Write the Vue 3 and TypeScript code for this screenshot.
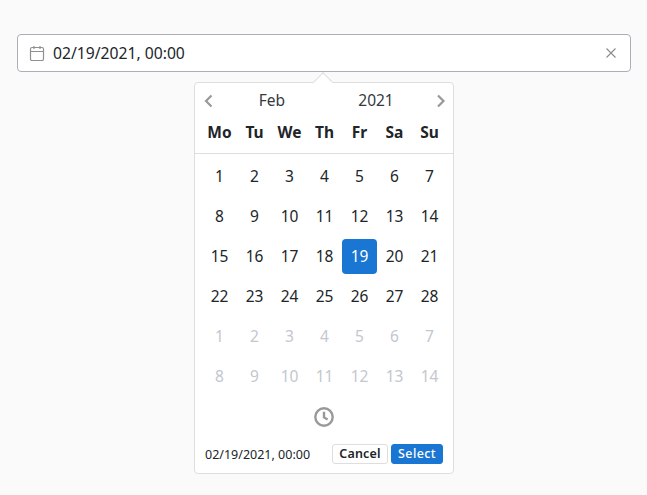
<script setup lang="ts">
interface Day { n: number; muted?: boolean; sel?: boolean }
const weekdays: string[] = ['Mo', 'Tu', 'We', 'Th', 'Fr', 'Sa', 'Su']
const days: Day[] = []
for (let i = 1; i <= 28; i++) days.push({ n: i, sel: i === 19 })
for (let i = 1; i <= 14; i++) days.push({ n: i, muted: true })
</script>

<template>
  <div class="page">
    <div class="field">
      <svg class="cal" width="16" height="16" viewBox="0 0 16 16" fill="none" stroke="#909090" stroke-width="1.200">
        <rect x="1.500" y="2.500" width="13" height="13" rx="1.500" />
        <path d="M1.500 6.500h13M5 1v3M11 1v3" />
      </svg>
      <span class="value">02/19/2021, 00:00</span>
      <svg class="clear" width="12" height="12" viewBox="0 0 12 12" fill="none" stroke="#8a8a8a" stroke-width="1.100">
        <path d="M1.500 1.500l9 9M10.500 1.500l-9 9" />
      </svg>
    </div>
    <div class="popup">
      <div class="arrow"></div>
      <div class="head">
        <svg class="nav" width="14" height="14" viewBox="0 0 14 14" fill="none" stroke="#999" stroke-width="2.200">
          <path d="M10.500 1.500L5 7l5.500 5.500" />
        </svg>
        <span class="month">Feb</span>
        <span class="year">2021</span>
        <svg class="nav next" width="12" height="14" viewBox="0 0 12 14" fill="none" stroke="#999" stroke-width="2.200">
          <path d="M3 1.500L8.500 7 3 12.500" />
        </svg>
      </div>
      <div class="weekdays">
        <span v-for="w in weekdays" :key="w" class="wd">{{ w }}</span>
      </div>
      <div class="days">
        <div v-for="(d, i) in days" :key="i" class="cell">
          <span class="day" :class="{ muted: d.muted, sel: d.sel }">{{ d.n }}</span>
        </div>
      </div>
      <div class="clock">
        <svg width="20" height="20" viewBox="0 0 20 20" fill="none" stroke="#999" stroke-width="2.400">
          <circle cx="10" cy="10" r="8.700" />
          <path d="M10 4.800v5.600l3.600 2.200" />
        </svg>
      </div>
      <div class="foot">
        <span class="stamp">02/19/2021, 00:00</span>
        <div class="btns">
          <button class="btn cancel">Cancel</button>
          <button class="btn select">Select</button>
        </div>
      </div>
    </div>
  </div>
</template>

<style>
html, body { margin: 0; background: #fafafa; }
</style>

<style scoped>
.page {
  width: 647px;
  height: 495px;
  box-sizing: border-box;
  padding: 34px 16px 0 17px;
  background: #fafafa;
  font-family: "Noto Sans", "Open Sans", sans-serif;
  color: #212529;
  overflow: hidden;
}
.field {
  height: 38px;
  box-sizing: border-box;
  display: flex;
  align-items: center;
  border: 1px solid #aeaeb8;
  border-radius: 4px;
  background: #fff;
  padding: 0 13px 0 11px;
}
.cal { flex: none; }
.value {
  margin-left: 8px;
  font-size: 15.700px;
  flex: 1;
}
.clear { flex: none; }
.popup {
  position: relative;
  width: 260px;
  height: 392px;
  box-sizing: border-box;
  margin: 10px 0 0 177px;
  background: #fff;
  border: 1px solid #dedede;
  border-radius: 4px;
  padding: 0 6px;
}
.arrow {
  position: absolute;
  top: -8px;
  left: 121px;
  width: 14px;
  height: 14px;
  box-sizing: border-box;
  background: #fff;
  border-left: 1px solid #dedede;
  border-top: 1px solid #dedede;
  transform: rotate(45deg);
}
.head {
  position: relative;
  display: grid;
  grid-template-columns: 14px 114px 94px 1fr;
  align-items: center;
  height: 36px;
}
.nav { display: block; }
.next { justify-self: end; }
.month, .year {
  text-align: center;
  font-size: 15.500px;
  color: #343a40;
  padding-bottom: 2px;
}
.weekdays {
  display: grid;
  grid-template-columns: repeat(7, 35px);
  height: 34px;
  border-bottom: 1px solid #dedede;
  margin: 0 -6px;
  padding-left: 7px;
}
.wd {
  text-align: center;
  font-weight: 700;
  font-size: 15.500px;
  line-height: 26px;
}
.days {
  display: grid;
  grid-template-columns: repeat(7, 35px);
  grid-auto-rows: 40px;
  margin-top: 2px;
  margin-left: 1px;
}
.cell {
  display: flex;
  align-items: center;
  justify-content: center;
}
.day {
  width: 35px;
  height: 35px;
  display: flex;
  align-items: center;
  justify-content: center;
  font-size: 15.500px;
  border-radius: 4px;
}
.day.muted { color: #c3c7ce; }
.day.sel { background: #1976d2; color: #fff; }
.clock {
  display: flex;
  justify-content: center;
  margin-top: 11px;
  height: 20px;
}
.foot {
  display: flex;
  align-items: center;
  justify-content: space-between;
  margin-top: 17px;
  padding: 0 4px;
}
.stamp { font-size: 12.500px; }
.btns { display: flex; gap: 3px; }
.btn {
  height: 20px;
  padding: 0;
  border-radius: 3px;
  font-family: inherit;
  font-size: 12.500px;
  font-weight: 600;
  letter-spacing: 0.200px;
  line-height: 18px;
  box-sizing: border-box;
}
.cancel { width: 56px; background: #fff; border: 1px solid #dedede; color: #212529; }
.select { width: 52px; background: #1976d2; border: 1px solid #1976d2; color: #fff; font-weight: 500; letter-spacing: 0.400px; }
</style>
